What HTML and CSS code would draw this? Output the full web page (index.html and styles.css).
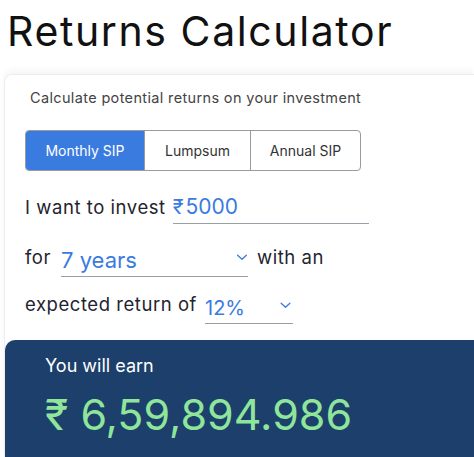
FILE: index.html
```html
<!DOCTYPE html>
<html>
<head>
<meta charset="utf-8">
<link rel="stylesheet" href="styles.css">
</head>
<body>
<h1 class="title">Returns Calculator</h1>
<div class="card">
  <div class="inner">
    <p class="subtitle">Calculate potential returns on your investment</p>
    <div class="tabs">
      <div class="tab active">Monthly SIP</div>
      <div class="tab">Lumpsum</div>
      <div class="tab">Annual SIP</div>
    </div>
    <div class="row r1">
      <span class="label">I want to invest</span>
      <span class="field amount"><span class="rupee">₹</span>5000</span>
    </div>
    <div class="row r2">
      <span class="label">for</span>
      <span class="field select years"><span class="val">7 years</span><svg class="chev" viewBox="0 0 12 8" width="12" height="7"><path d="M1 1.5 L6 6 L11 1.5" fill="none" stroke="#3a7be0" stroke-width="1.5" stroke-linecap="round" stroke-linejoin="round"/></svg></span>
      <span class="label after">with an</span>
    </div>
    <div class="row r3">
      <span class="label">expected return of</span>
      <span class="field select pct"><span class="val">12%</span><svg class="chev" viewBox="0 0 12 8" width="11" height="7"><path d="M1 1.5 L6 6 L11 1.5" fill="none" stroke="#3a7be0" stroke-width="1.5" stroke-linecap="round" stroke-linejoin="round"/></svg></span>
    </div>
  </div>
  <div class="result">
    <div class="earn">You will earn</div>
    <div class="total">₹ 6,59,894.986</div>
  </div>
</div>
</body>
</html>
```
FILE: styles.css
```css
* { box-sizing: border-box; }
html, body { margin: 0; padding: 0; background: #fff; }
body {
  font-family: "Inter", "Noto Sans", sans-serif;
  color: #1f2430;
  width: 474px;
  height: 457px;
  overflow: hidden;
}
.title {
  margin: 0;
  padding: 6px 0 0 7px;
  font-weight: 400;
  font-size: 41px;
  line-height: 50px;
  letter-spacing: 1.6px;
  color: #111;
  height: 74px;
}
.card {
  margin-left: 4px;
  border: 1px solid #ececec;
  border-right: none;
  border-radius: 8px 0 0 0;
  box-shadow: 0 -4px 6px rgba(0,0,0,0.04);
  height: 384px;
  overflow: hidden;
}
.inner { padding: 0 0 0 20px; }
.subtitle {
  margin: 0;
  padding: 14px 0 0 5px;
  font-size: 14.5px;
  line-height: 18px;
  letter-spacing: 0.35px;
  color: #444;
}
.tabs {
  display: flex;
  margin-top: 23px;
  width: 336px;
  height: 41px;
  border: 1px solid #9a9a9a;
  border-radius: 4px;
  overflow: hidden;
}
.tab {
  display: flex;
  align-items: center;
  justify-content: center;
  font-size: 14px;
  color: #333;
  border-left: 1px solid #9a9a9a;
}
.tab:nth-child(1) { width: 118px; border-left: none; }
.tab:nth-child(2) { width: 106px; }
.tab:nth-child(3) { flex: 1; }
.tab.active { background: #3a7be0; color: #fff; }
.row {
  display: flex;
  align-items: flex-start;
}
.r1 { margin-top: 24px; height: 50px; }
.r2 { height: 47px; }
.r3 { height: 43px; }
.label {
  font-size: 18.5px;
  line-height: 24px;
  letter-spacing: 0.55px;
  color: #1f2430;
}
.field {
  display: flex;
  align-items: flex-start;
  border-bottom: 1.5px solid #9aa0a8;
  color: #3a7be0;
  line-height: 24px;
}
.amount {
  width: 196px;
  margin-left: 7px;
  font-size: 21px;
  padding-bottom: 3.5px;
}
.rupee { font-size: 20px; margin-right: 2px; }
.select { justify-content: space-between; }
.years {
  width: 187px;
  margin-left: 10px;
  margin-top: 3px;
  font-size: 22px;
  padding-bottom: 4px;
}
.pct {
  width: 88px;
  margin-left: 8px;
  margin-top: 3.5px;
  font-size: 20px;
  padding-bottom: 3.3px;
}
.years .chev { margin-top: 6px; margin-right: 0; }
.pct .chev { margin-top: 6px; margin-right: 2px; }
.after { margin-left: 9px; }
.result {
  margin-top: 5px;
  margin-left: 0;
  background: #1c3f6c;
  border-radius: 10px 0 0 0;
  height: 140px;
  padding: 14px 0 0 40px;
}
.earn {
  color: #fff;
  font-size: 18px;
  line-height: 24px;
}
.total {
  color: #8fe59a;
  font-size: 43px;
  line-height: 50px;
  margin-top: 11px;
}
```
